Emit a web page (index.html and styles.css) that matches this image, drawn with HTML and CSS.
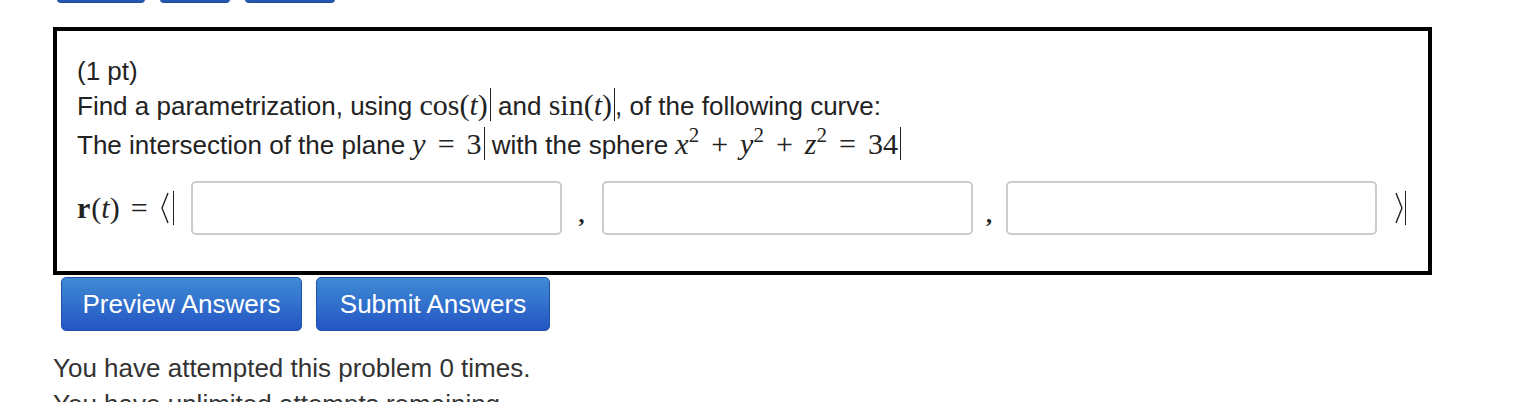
FILE: index.html
```html
<!DOCTYPE html>
<html lang="en">
<head>
    <meta charset="UTF-8">
    <title>Problem</title>
    <link rel="stylesheet" href="styles.css">
</head>
<body>
    <div class="top-nav">
        <span class="nav-btn w1"></span>
        <span class="nav-btn w2"></span>
        <span class="nav-btn w3"></span>
    </div>

    <div class="problem">
        <div class="line">(1 pt)</div>
        <div class="line">Find a parametrization, using <span class="math">cos(<i>t</i>)</span> and <span class="math">sin(<i>t</i>)</span>, of the following curve:</div>
        <div class="line tall">The intersection of the plane <span class="math"><i>y</i><span class="op">=</span>3</span> with the sphere <span class="math"><i>x</i><sup>2</sup><span class="op">+</span><i>y</i><sup>2</sup><span class="op">+</span><i>z</i><sup>2</sup><span class="op">=</span>34</span></div>

        <div class="answer-row">
            <span class="math lhs"><b>r</b>(<i>t</i>)<span class="op">=</span><svg class="angle" width="10" height="32" viewBox="0 0 10 32"><polyline points="8,1 2,16 8,31" fill="none" stroke="#222" stroke-width="1.4"/></svg></span>
            <input class="answer" type="text">
            <span class="comma c1">,</span>
            <input class="answer" type="text">
            <span class="comma c2">,</span>
            <input class="answer" type="text">
            <span class="math rhs"><svg class="angle" width="10" height="32" viewBox="0 0 10 32"><polyline points="2,1 8,16 2,31" fill="none" stroke="#222" stroke-width="1.4"/></svg></span>
        </div>
    </div>

    <div class="actions">
        <button class="btn preview">Preview Answers</button>
        <button class="btn submit">Submit Answers</button>
    </div>

    <div class="status">
        <p>You have attempted this problem 0 times.</p>
        <p>You have unlimited attempts remaining.</p>
    </div>
</body>
</html>
```

FILE: styles.css
```css
body {
    margin: 0;
    font-family: "Liberation Sans", Arial, sans-serif;
    font-size: 26px;
    color: #333;
    background: white;
}
.top-nav {
    display: flex;
    gap: 15px;
    margin: -28px 0 0 57px;
    height: 30px;
}
.nav-btn {
    display: block;
    height: 30px;
    border-radius: 4px;
    background: linear-gradient(#3c87d0, #2454b0);
    border-bottom: 1px solid #1f4d96;
}
.w1 { width: 88px; }
.w2 { width: 70px; }
.w3 { width: 90px; }
.problem {
    box-sizing: border-box;
    margin: 25px 0 0 53px;
    width: 1379px;
    border: 4px solid black;
    padding: 23px 0 36px 20px;
    color: #222;
}
.line {
    line-height: 34px;
}
.line.tall {
    padding-top: 4px;
}
.math {
    font-family: "Liberation Serif", "Times New Roman", serif;
    font-size: 30px;
    border-right: 1px solid #222;
    padding-right: 2px;
}
.math sup {
    font-size: 21px;
    line-height: 0;
    vertical-align: 12px;
}
.op {
    margin: 0 12px;
}
.answer-row {
    display: flex;
    align-items: center;
    margin-top: 19px;
}
.lhs {
    display: flex;
    align-items: center;
    height: 34px;
    padding-right: 3px;
}
.lhs .op {
    margin: 0 11px;
}
.lhs b {
    margin-right: 1px;
}
.angle {
    margin-left: 1px;
}
.rhs {
    display: flex;
    align-items: center;
    height: 34px;
    padding-right: 1px;
    margin-left: 17px;
}
.rhs .angle {
    margin-left: 0;
}
.answer {
    width: 371px;
    height: 54px;
    box-sizing: border-box;
    border: 2px solid #ccc;
    border-radius: 5px;
    margin: 0;
    font-size: 20px;
}
.lhs + .answer {
    margin-left: 17px;
}
.comma {
    font-family: "Liberation Serif", serif;
    font-weight: bold;
    font-size: 24px;
    text-align: center;
    position: relative;
    top: 6px;
}
.c1 { width: 40px; }
.c2 { width: 33px; }
.actions {
    display: flex;
    gap: 14px;
    margin: 2px 0 0 61px;
}
.btn {
    height: 54px;
    padding: 0;
    font-family: "Liberation Sans", Arial, sans-serif;
    font-size: 26px;
    color: white;
    background: linear-gradient(#3f8bd4, #2455c4);
    border: 1px solid #2150a8;
    border-radius: 5px;
    cursor: pointer;
}
.preview { width: 241px; }
.submit { width: 234px; }
.status {
    margin: 19px 0 0 53px;
}
.status p {
    margin: 0;
    line-height: 36px;
    font-size: 26px;
    color: #333;
}
```
